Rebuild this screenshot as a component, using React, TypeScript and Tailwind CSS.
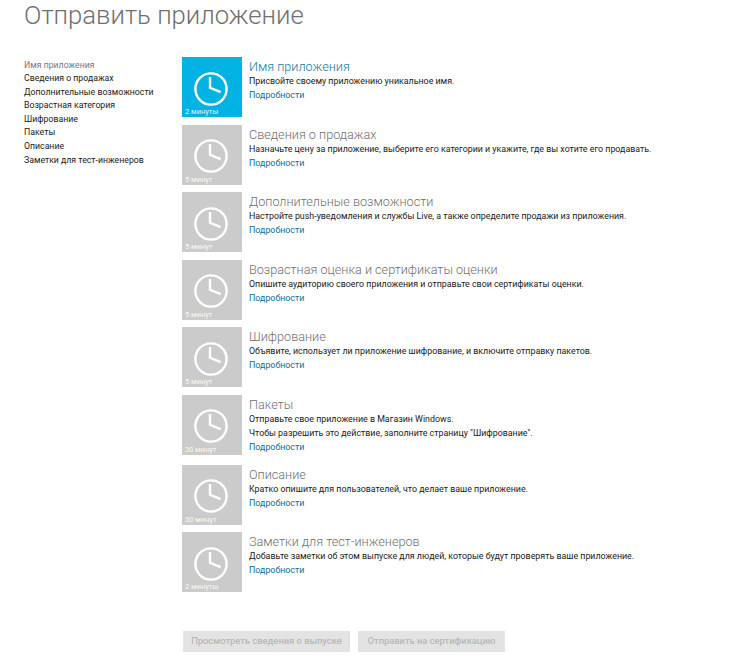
const navItems = [
  "Имя приложения",
  "Сведения о продажах",
  "Дополнительные возможности",
  "Возрастная категория",
  "Шифрование",
  "Пакеты",
  "Описание",
  "Заметки для тест-инженеров",
];

const steps = [
  { title: "Имя приложения", time: "2 минуты", lines: ["Присвойте своему приложению уникальное имя."], active: true },
  { title: "Сведения о продажах", time: "5 минут", lines: ["Назначьте цену за приложение, выберите его категории и укажите, где вы хотите его продавать."] },
  { title: "Дополнительные возможности", time: "5 минут", lines: ["Настройте push-уведомления и службы Live, а также определите продажи из приложения."] },
  { title: "Возрастная оценка и сертификаты оценки", time: "5 минут", lines: ["Опишите аудиторию своего приложения и отправьте свои сертификаты оценки."] },
  { title: "Шифрование", time: "5 минут", lines: ["Объявите, использует ли приложение шифрование, и включите отправку пакетов."] },
  { title: "Пакеты", time: "30 минут", lines: ["Отправьте свое приложение в Магазин Windows.", "Чтобы разрешить это действие, заполните страницу \"Шифрование\"."] },
  { title: "Описание", time: "30 минут", lines: ["Кратко опишите для пользователей, что делает ваше приложение."] },
  { title: "Заметки для тест-инженеров", time: "2 минуты", lines: ["Добавьте заметки об этом выпуске для людей, которые будут проверять ваше приложение."] },
];

function Clock() {
  return (
    <svg className="mr-[2px] mt-[3px]" width="34" height="34" viewBox="0 0 34 34" fill="none" stroke="white" strokeWidth="2.4">
      <circle cx="17" cy="17" r="15.6" />
      <path d="M16 5v10.8l10.7 4.4" />
    </svg>
  );
}

export default function App() {
  return (
    <div className="min-h-[667px] bg-white font-['Roboto',sans-serif] text-[8.85px] text-[#1a1a1a]">
      <h1 className="pl-6 text-[25.7px] font-light leading-[30px] text-[#707070]">Отправить приложение</h1>
      <div className="mt-[27px] flex">
        <ul className="ml-6 w-[158px] pt-[1.5px] text-[8.72px] leading-[13.6px]">
          {navItems.map((item, i) => (
            <li key={item} className={i === 0 ? "text-[#777]" : ""}>{item}</li>
          ))}
        </ul>
        <div className="flex-1">
          {steps.map((s) => (
            <div key={s.title} className="mb-[7.5px] flex min-h-[60px]">
              <div className={`relative flex h-[60px] w-[60px] shrink-0 items-center justify-center ${s.active ? "bg-[#00b3e3]" : "bg-[#cbcbcb]"}`}>
                <Clock />
                <span className="absolute bottom-0 left-[3px] text-[7.5px] leading-[10px] text-white/85">{s.time}</span>
              </div>
              <div className="ml-[7px]">
                <div className={`pt-[2px] text-[12.67px] font-light leading-[15px] ${s.active ? "text-[#0b7ea8]" : "text-[#707070]"}`}>{s.title}</div>
                {s.lines.map((l) => (
                  <div key={l} className="leading-[14px]">{l}</div>
                ))}
                <a className="mb-[3.5px] block leading-[14px] text-[#0a6f97]">Подробности</a>
              </div>
            </div>
          ))}
          <div className="ml-px mt-[39px] flex gap-2">
            <button className="h-[21px] w-[167px] bg-[#e3e3e3] text-[9.35px] font-medium whitespace-nowrap text-[#b8b8b8]">Просмотреть сведения о выпуске</button>
            <button className="h-[21px] w-[147px] bg-[#e3e3e3] text-[9.35px] font-medium whitespace-nowrap text-[#b8b8b8]">Отправить на сертификацию</button>
          </div>
        </div>
      </div>
    </div>
  );
}
